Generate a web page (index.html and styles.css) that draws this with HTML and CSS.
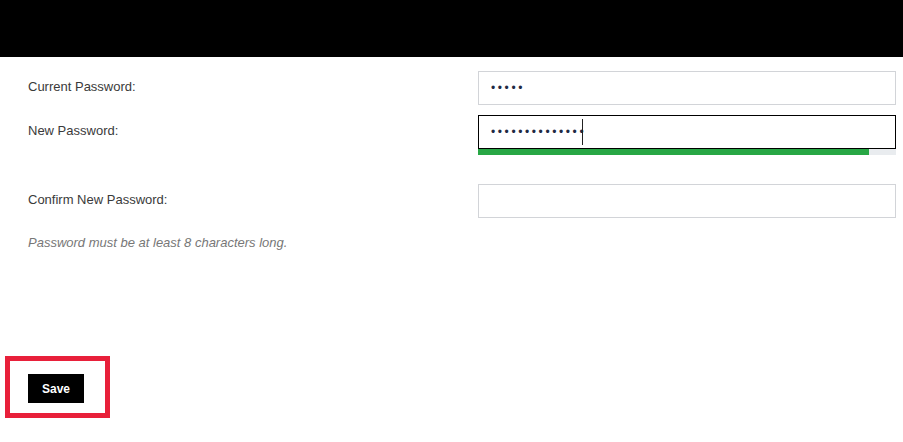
FILE: index.html
```html
<!DOCTYPE html>
<html lang="en">
<head>
<meta charset="utf-8">
<title>Change Password</title>
<link rel="stylesheet" href="styles.css">
</head>
<body>
<header class="topbar"></header>
<main class="page">
  <form class="pw-form">
    <div class="row">
      <label class="label" for="cur">Current Password:</label>
      <div class="field">
        <input class="input" id="cur" type="password" value="12345">
      </div>
    </div>
    <div class="row row-new">
      <label class="label" for="new">New Password:</label>
      <div class="field">
        <div class="input-wrap">
          <input class="input input-focus" id="new" type="password" value="abcdefghijklmn">
          <span class="caret"></span>
        </div>
        <div class="strength"><div class="strength-fill" style="width:93.5%"></div></div>
      </div>
    </div>
    <div class="row row-confirm">
      <label class="label" for="conf">Confirm New Password:</label>
      <div class="field">
        <input class="input" id="conf" type="password" value="">
      </div>
    </div>
    <p class="hint">Password must be at least 8 characters long.</p>
    <div class="save-box">
      <button type="button" class="save">Save</button>
    </div>
  </form>
</main>
</body>
</html>
```
FILE: styles.css
```css
html, body {
  margin: 0;
  padding: 0;
  background: #fff;
}
body {
  font-family: "Liberation Sans", Arial, sans-serif;
  font-size: 13px;
  color: #333;
}
.topbar {
  height: 57px;
  background: #000;
}
.page {
  padding: 14px 7px 0 0;
  border-left: 1px solid #fff;
}
.pw-form {
  margin: 0;
}
.row {
  display: flex;
  align-items: flex-start;
  padding-left: 27px;
}
.label {
  flex: 1;
  line-height: 18px;
  padding-top: 7px;
  color: #3a3a3a;
}
.field {
  width: 418px;
}
.input {
  display: block;
  box-sizing: border-box;
  width: 418px;
  height: 34px;
  margin: 0;
  padding: 0 12px;
  border: 1px solid #d2d4d8;
  background: #fff;
  font-family: "Liberation Sans", Arial, sans-serif;
  font-size: 12px;
  letter-spacing: 2.6px;
  color: #1f2a44;
  outline: none;
}
.input-focus {
  border-color: #000;
}
.input-wrap {
  position: relative;
}
.caret {
  position: absolute;
  left: 104px;
  top: 4px;
  width: 1px;
  height: 26px;
  background: #222;
}
.row-new {
  margin-top: 10px;
}
.strength {
  height: 6px;
  background: #e9ecef;
}
.strength-fill {
  height: 100%;
  background: #28a745;
}
.row-confirm {
  margin-top: 29px;
}
.hint {
  margin: 16px 0 0 27px;
  line-height: 18px;
  font-style: italic;
  color: #777;
}
.save-box {
  display: inline-flex;
  box-sizing: border-box;
  width: 105px;
  height: 62px;
  margin: 104px 0 0 4px;
  padding: 13px 0 0 18px;
  border: 5px solid #e8203a;
}
.save {
  width: 56px;
  height: 29px;
  padding: 0;
  border: 0;
  background: #000;
  color: #fff;
  font-family: "Liberation Sans", Arial, sans-serif;
  font-size: 12px;
  font-weight: bold;
  cursor: pointer;
}
```
